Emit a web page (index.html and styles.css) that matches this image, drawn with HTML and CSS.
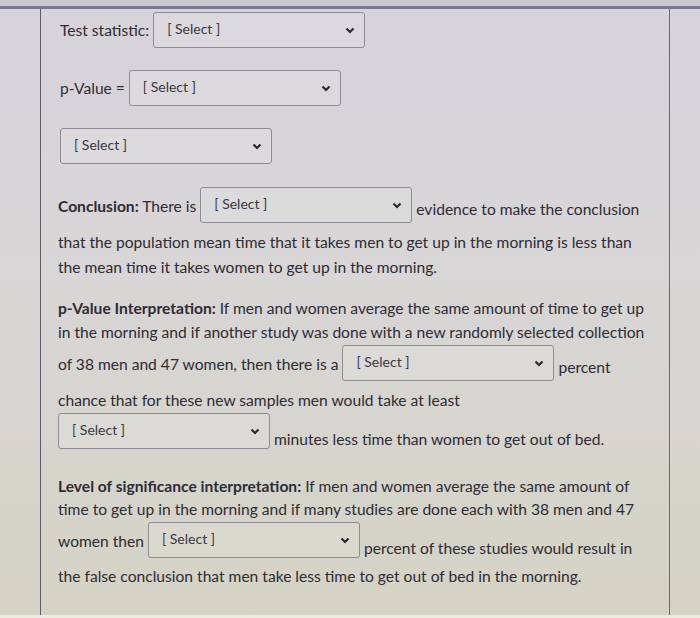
FILE: index.html
```html
<!DOCTYPE html>
<html lang="en">
<head>
  <meta charset="UTF-8">
  <meta name="viewport" content="width=device-width, initial-scale=1.0">
  <title>Quiz</title>
  <link rel="stylesheet" href="styles.css">
</head>
<body>

<div class="topbar"></div>

<div class="question">
  <p class="field">Test statistic: <span class="select"><span class="placeholder">[ Select ]</span><svg class="chevron" viewBox="0 0 10 7"><polyline points="1.5,1.5 5,5 8.5,1.5"/></svg></span></p>

  <p class="field">p-Value = <span class="select"><span class="placeholder">[ Select ]</span><svg class="chevron" viewBox="0 0 10 7"><polyline points="1.5,1.5 5,5 8.5,1.5"/></svg></span></p>

  <p class="field"><span class="select"><span class="placeholder">[ Select ]</span><svg class="chevron" viewBox="0 0 10 7"><polyline points="1.5,1.5 5,5 8.5,1.5"/></svg></span></p>

  <p class="text conclusion">
    <strong>Conclusion:</strong> There is <span class="select"><span class="placeholder">[ Select ]</span><svg class="chevron" viewBox="0 0 10 7"><polyline points="1.5,1.5 5,5 8.5,1.5"/></svg></span> <span class="after">evidence to make the conclusion</span><br>
    that the population mean time that it takes men to get up in the morning is less than<br>
    the mean time it takes women to get up in the morning.
  </p>

  <p class="text pvalue">
    <strong>p-Value Interpretation:</strong> If men and women average the same amount of time to get up<br>
    in the morning and if another study was done with a new randomly selected collection<br>
    of 38 men and 47 women, then there is a <span class="select"><span class="placeholder">[ Select ]</span><svg class="chevron" viewBox="0 0 10 7"><polyline points="1.5,1.5 5,5 8.5,1.5"/></svg></span> <span class="after">percent</span><br>
    chance that for these new samples men would take at least<br>
    <span class="select"><span class="placeholder">[ Select ]</span><svg class="chevron" viewBox="0 0 10 7"><polyline points="1.5,1.5 5,5 8.5,1.5"/></svg></span> <span class="after deep">minutes less time than women to get out of bed.</span>
  </p>

  <p class="text level">
    <strong>Level of significance interpretation:</strong> If men and women average the same amount of<br>
    time to get up in the morning and if many studies are done each with 38 men and 47<br>
    women then <span class="select"><span class="placeholder">[ Select ]</span><svg class="chevron" viewBox="0 0 10 7"><polyline points="1.5,1.5 5,5 8.5,1.5"/></svg></span> <span class="after deep">percent of these studies would result in</span><br>
    the false conclusion that men take less time to get out of bed in the morning.
  </p>
</div>

<div class="bottomstrip"></div>

</body>
</html>
```

FILE: styles.css
```css
body {
  margin: 0;
  height: 618px;
  display: flex;
  flex-direction: column;
  background: linear-gradient(180deg, #d6d3da 0%, #d8d6d6 45%, #d4d3c4 100%);
  color: #2e2c34;
  font-family: Lato, "Open Sans", sans-serif;
  font-size: 15.6px;
  overflow: hidden;
}
.topbar {
  height: 6px;
  background: #cac7ce;
  border-bottom: 3px solid #7a7792;
}
.question {
  flex: 1;
  margin: 0 30px 0 40px;
  padding: 3px 0 0 17px;
  border-left: 1px solid #5d5b64;
  border-right: 1px solid #6a6872;
}
p {
  margin: 0;
}
.field {
  display: flex;
  align-items: center;
  gap: 4px;
  height: 36px;
  margin-bottom: 22px;
  padding-left: 2px;
}
.select {
  display: inline-flex;
  align-items: center;
  justify-content: space-between;
  box-sizing: border-box;
  width: 212px;
  height: 36px;
  padding: 0 9px 2px 13px;
  border: 1px solid #8d8b94;
  border-radius: 3px;
  background: rgba(255, 255, 255, 0.12);
  color: #3a3842;
  font-size: 14px;
  line-height: 1;
}
.text .select {
  vertical-align: middle;
  margin: 1px 0 7px;
}
.chevron {
  width: 10px;
  height: 7px;
  margin-top: 2px;
}
.chevron polyline {
  fill: none;
  stroke: #2a2830;
  stroke-width: 2.2;
}
.text {
  line-height: 24px;
}
.after {
  vertical-align: -3px;
}
.after.deep {
  vertical-align: -7px;
}
.conclusion {
  margin-top: 21px;
  line-height: 25px;
}
.pvalue {
  margin-top: 16px;
}
.level {
  margin-top: 19px;
  line-height: 23px;
}
.bottomstrip {
  height: 3px;
  background: #ebeae3;
}
```
